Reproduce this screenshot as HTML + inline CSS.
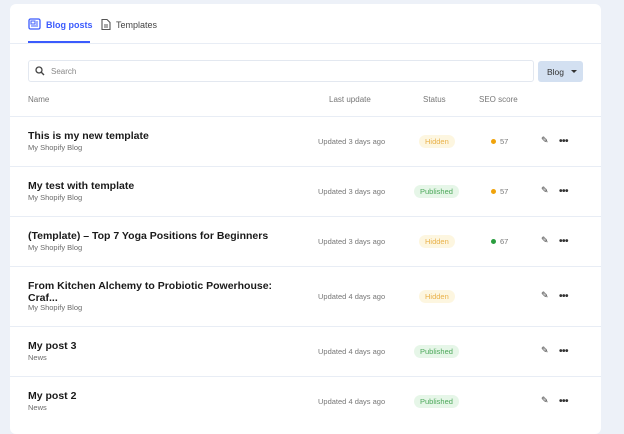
<!DOCTYPE html>
<html><head><style>
body{margin:0;width:624px;height:423px;background:#edf1f8;font-family:"Liberation Sans",sans-serif;overflow:hidden;position:relative}
.card{position:absolute;left:10px;top:4px;width:591px;height:430px;background:#fff;border-radius:6px}
.a{position:absolute;white-space:nowrap}
.hl{position:absolute;left:0;width:591px;height:1px;background:#e8edf5}
.t{font-size:10.5px;font-weight:bold;color:#1a1a1a}
.s{font-size:7.5px;color:#6b6b6b}
.u{font-size:7.5px;color:#777}
.pill{position:absolute;font-size:7.5px;padding:2px 6px;border-radius:8px}
.hid{background:#fdf6e0;color:#e9b14a}
.pub{background:#e6f6e8;color:#4ca85a}
.dot{position:absolute;width:5px;height:5px;border-radius:50%}
.n{font-size:7.5px;color:#777}
.dots{font-size:10px;font-weight:bold;color:#333;letter-spacing:-0.5px}
</style></head><body>
<div class="card">
 <svg class="a" style="left:18px;top:14px" width="13" height="12" viewBox="0 0 13 12"><rect x="1" y="1" width="11" height="10" rx="1.5" fill="none" stroke="#3b5bfd" stroke-width="1.3"/><rect x="3" y="3" width="4" height="3" fill="none" stroke="#3b5bfd"/><line x1="3" y1="8" x2="8" y2="8" stroke="#3b5bfd"/><line x1="9" y1="3" x2="9" y2="9" stroke="#3b5bfd"/></svg>
 <div class="a" style="left:36px;top:16px;font-size:9px;font-weight:bold;color:#3b5bfd">Blog posts</div>
 <div class="a" style="left:18px;top:37px;width:62px;height:2px;background:#3b5bfd"></div>
 <svg class="a" style="left:91px;top:14px" width="10" height="13" viewBox="0 0 10 13"><path d="M1 1.5h5l3 3v7H1z" fill="none" stroke="#555" stroke-width="1.1"/><line x1="3" y1="7" x2="7" y2="7" stroke="#555"/><line x1="3" y1="9" x2="7" y2="9" stroke="#555"/></svg>
 <div class="a" style="left:106px;top:16px;font-size:9px;color:#444">Templates</div>
 <div class="hl" style="top:39px"></div>
 <div class="a" style="left:18px;top:56px;width:504px;height:20px;border:1px solid #e3e8f0;border-radius:3px"></div>
 <svg class="a" style="left:25px;top:62px" width="10" height="10" viewBox="0 0 10 10"><circle cx="4" cy="4" r="3" fill="none" stroke="#444" stroke-width="1.3"/><line x1="6.3" y1="6.3" x2="9" y2="9" stroke="#444" stroke-width="1.4"/></svg>
 <div class="a" style="left:41px;top:63px;font-size:8px;color:#888">Search</div>
 <div class="a" style="left:528px;top:57px;width:45px;height:21px;background:#d3e0f1;border-radius:3px"></div>
 <div class="a" style="left:537px;top:63px;font-size:8.5px;color:#333">Blog</div>
 <div class="a" style="left:561px;top:66px;width:0;height:0;border-left:3px solid transparent;border-right:3px solid transparent;border-top:3px solid #333"></div>
 <div class="a" style="left:18px;top:91px;font-size:8px;color:#777">Name</div>
 <div class="a" style="left:319px;top:91px;font-size:8px;color:#777">Last update</div>
 <div class="a" style="left:413px;top:91px;font-size:8px;color:#777">Status</div>
 <div class="a" style="left:469px;top:91px;font-size:8px;color:#777">SEO score</div>
 <div class="hl" style="top:112px"></div>
 <div class="hl" style="top:162px"></div>
 <div class="hl" style="top:212px"></div>
 <div class="hl" style="top:262px"></div>
 <div class="hl" style="top:322px"></div>
 <div class="hl" style="top:372px"></div>

 <div class="a t" style="left:18px;top:126px">This is my new template</div>
 <div class="a s" style="left:18px;top:139px">My Shopify Blog</div>
 <div class="a u" style="left:308px;top:133px">Updated 3 days ago</div>
 <div class="pill hid" style="left:409px;top:131px">Hidden</div>
 <div class="dot" style="left:481px;top:135px;background:#f0a30a"></div><div class="a n" style="left:490px;top:133px">57</div>
 <div class="a" style="left:531px;top:131px;font-size:9px;color:#333">✎</div><div class="a dots" style="left:549px;top:132px">•••</div>

 <div class="a t" style="left:18px;top:176px">My test with template</div>
 <div class="a s" style="left:18px;top:189px">My Shopify Blog</div>
 <div class="a u" style="left:308px;top:183px">Updated 3 days ago</div>
 <div class="pill pub" style="left:404px;top:181px">Published</div>
 <div class="dot" style="left:481px;top:185px;background:#f0a30a"></div><div class="a n" style="left:490px;top:183px">57</div>
 <div class="a" style="left:531px;top:181px;font-size:9px;color:#333">✎</div><div class="a dots" style="left:549px;top:182px">•••</div>

 <div class="a t" style="left:18px;top:226px">(Template) – Top 7 Yoga Positions for Beginners</div>
 <div class="a s" style="left:18px;top:239px">My Shopify Blog</div>
 <div class="a u" style="left:308px;top:233px">Updated 3 days ago</div>
 <div class="pill hid" style="left:409px;top:231px">Hidden</div>
 <div class="dot" style="left:481px;top:235px;background:#2a9d3e"></div><div class="a n" style="left:490px;top:233px">67</div>
 <div class="a" style="left:531px;top:231px;font-size:9px;color:#333">✎</div><div class="a dots" style="left:549px;top:232px">•••</div>

 <div class="a t" style="left:18px;top:276px">From Kitchen Alchemy to Probiotic Powerhouse:</div>
 <div class="a t" style="left:18px;top:288px">Craf...</div>
 <div class="a s" style="left:18px;top:299px">My Shopify Blog</div>
 <div class="a u" style="left:308px;top:288px">Updated 4 days ago</div>
 <div class="pill hid" style="left:409px;top:286px">Hidden</div>
 <div class="a" style="left:531px;top:286px;font-size:9px;color:#333">✎</div><div class="a dots" style="left:549px;top:287px">•••</div>

 <div class="a t" style="left:18px;top:336px">My post 3</div>
 <div class="a s" style="left:18px;top:349px">News</div>
 <div class="a u" style="left:308px;top:343px">Updated 4 days ago</div>
 <div class="pill pub" style="left:404px;top:341px">Published</div>
 <div class="a" style="left:531px;top:341px;font-size:9px;color:#333">✎</div><div class="a dots" style="left:549px;top:342px">•••</div>

 <div class="a t" style="left:18px;top:386px">My post 2</div>
 <div class="a s" style="left:18px;top:399px">News</div>
 <div class="a u" style="left:308px;top:393px">Updated 4 days ago</div>
 <div class="pill pub" style="left:404px;top:391px">Published</div>
 <div class="a" style="left:531px;top:391px;font-size:9px;color:#333">✎</div><div class="a dots" style="left:549px;top:392px">•••</div>
</div>
</body></html>
